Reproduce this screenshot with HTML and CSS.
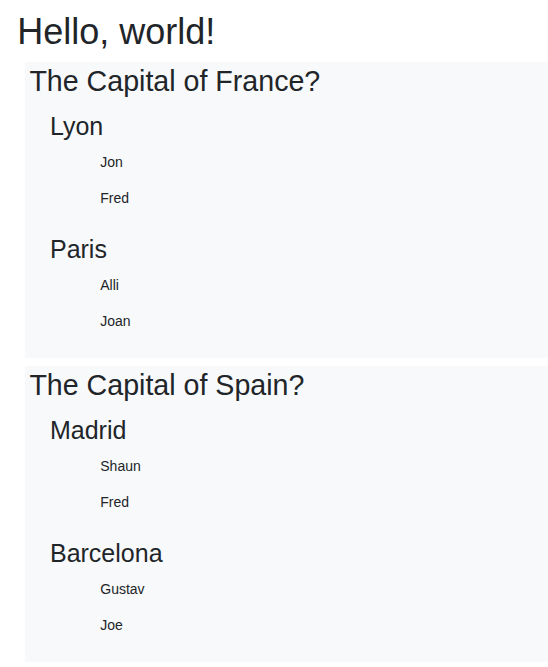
FILE: index.html
```html
<!DOCTYPE html>
<html lang="en">
<head>
<meta charset="utf-8">
<title>Quiz</title>
<link rel="stylesheet" href="styles.css">
</head>
<body>
<div class="page">
  <h1 class="title">Hello, world!</h1>
  <section class="panel">
    <h2 class="question">The Capital of France?</h2>
    <div class="city">
      <h3 class="city-name">Lyon</h3>
      <p class="person">Jon</p>
      <p class="person">Fred</p>
    </div>
    <div class="city">
      <h3 class="city-name">Paris</h3>
      <p class="person">Alli</p>
      <p class="person">Joan</p>
    </div>
  </section>
  <section class="panel">
    <h2 class="question">The Capital of Spain?</h2>
    <div class="city">
      <h3 class="city-name">Madrid</h3>
      <p class="person">Shaun</p>
      <p class="person">Fred</p>
    </div>
    <div class="city">
      <h3 class="city-name">Barcelona</h3>
      <p class="person">Gustav</p>
      <p class="person">Joe</p>
    </div>
  </section>
</div>
</body>
</html>
```
FILE: styles.css
```css
html, body {
  margin: 0;
  padding: 0;
  background: #ffffff;
}
body {
  font-family: "Liberation Sans", Arial, sans-serif;
  color: #212529;
  font-size: 14px;
  line-height: 1.5;
}
.page {
  padding: 11.4px 0 0 17.2px;
}
.title {
  margin: 0 0 8.6px 0;
  font-size: 36px;
  line-height: 42px;
  font-weight: 400;
}
.panel {
  display: flex;
  flex-direction: column;
  margin: 0 0 8px 7.8px;
  padding: 3.2px 0 0 4.4px;
  background: #f8f9fa;
}
.question {
  margin: 0 0 13px 0;
  font-size: 28.6px;
  line-height: 33.6px;
  font-weight: 400;
}
.city {
  display: flex;
  flex-direction: column;
  align-items: flex-start;
  margin: 0 0 0 20.6px;
  padding-bottom: 10.8px;
}
.city-name {
  margin: 0 0 10.8px 0;
  font-size: 25px;
  line-height: 29.4px;
  font-weight: 400;
}
.person {
  margin: 0 0 15px 50.3px;
  font-size: 14px;
  line-height: 21px;
}
```
